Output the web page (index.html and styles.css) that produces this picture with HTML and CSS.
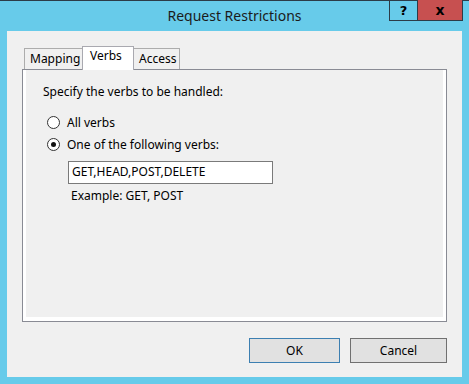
FILE: index.html
```html
<!DOCTYPE html>
<html>
<head>
<meta charset="utf-8">
<link rel="stylesheet" href="styles.css">
</head>
<body>
<div class="window">
  <div class="titlebar">
    <div class="spacer"></div>
    <div class="title">Request Restrictions</div>
    <div class="controls">
      <div class="ctl help">?</div>
      <div class="ctl close">x</div>
    </div>
  </div>
  <div class="client">
    <div class="tabs">
      <div class="tab">Mapping</div>
      <div class="tab active">Verbs</div>
      <div class="tab">Access</div>
    </div>
    <div class="panel">
      <div class="prompt">Specify the verbs to be handled:</div>
      <div class="radio-row first"><span class="radio"></span><span>All verbs</span></div>
      <div class="radio-row"><span class="radio checked"></span><span>One of the following verbs:</span></div>
      <div class="field">GET,HEAD,POST,DELETE</div>
      <div class="example">Example: GET, POST</div>
    </div>
    <div class="buttons">
      <div class="btn ok">OK</div>
      <div class="btn cancel">Cancel</div>
    </div>
  </div>
</div>
</body>
</html>
```
FILE: styles.css
```css
html, body {
  margin: 0;
  padding: 0;
}
body {
  background: #67cbea;
  font-family: "Noto Sans", "DejaVu Sans", sans-serif;
  font-size: 12px;
  color: #000;
}
.window {
  width: 469px;
  height: 384px;
  box-sizing: border-box;
  border-top: 1px solid #2c3c48;
  background: #67cbea;
}
.titlebar {
  height: 30px;
  display: grid;
  grid-template-columns: 1fr auto 1fr;
  align-items: start;
}
.title {
  font-size: 14px;
  color: #1b1b1b;
  line-height: 28px;
  padding-top: 1px;
}
.controls {
  justify-self: end;
  display: flex;
  margin-right: 6px;
  margin-top: -1px;
}
.ctl {
  height: 21px;
  box-sizing: border-box;
  border: 1px solid #2c3c48;
  border-top: none;
  display: flex;
  align-items: center;
  justify-content: center;
  font-weight: bold;
  font-size: 13px;
  font-family: "DejaVu Sans", sans-serif;
}
.help {
  width: 29px;
}
.close {
  width: 46px;
  margin-left: -1px;
  background: #c75050;
  font-size: 14px;
}
.client {
  margin: 0 7px;
  height: 346px;
  background: #f0f0f0;
  box-sizing: border-box;
  padding: 15px 15px 0 15px;
  display: flex;
  flex-direction: column;
}
.tabs {
  display: flex;
  align-items: flex-end;
  height: 23px;
  padding-left: 2px;
}
.tab {
  height: 21px;
  box-sizing: border-box;
  border: 1px solid #acacac;
  border-bottom: none;
  padding: 0 0 0 5px;
  line-height: 20px;
  background: #f0f0f0;
  margin-left: -1px;
}
.tab:first-child {
  margin-left: 0;
  width: 59px;
}
.tab.active {
  height: 24px;
  width: 52px;
  margin-bottom: -1px;
  background: #fff;
  position: relative;
  z-index: 1;
  padding-left: 7px;
  line-height: 18px;
  border-color: #a9a9b0;
}
.tab:last-child {
  width: 47px;
}
.panel {
  height: 253px;
  box-sizing: border-box;
  border: 1px solid #898b94;
  box-shadow: inset 3px 0 0 #fff, inset -3px 0 0 #fff, inset 0 -4px 0 #fff;
  background: #f0f0f0;
  padding: 14px 0 0 20px;
}
.prompt {
  line-height: 16px;
}
.radio-row {
  display: flex;
  align-items: center;
  gap: 7px;
  height: 16px;
  margin-top: 6px;
  padding-left: 4px;
}
.radio-row.first {
  margin-top: 14px;
}
.radio {
  width: 13px;
  height: 13px;
  box-sizing: border-box;
  border: 1px solid #333;
  border-radius: 50%;
  background: #fff;
  display: flex;
  align-items: center;
  justify-content: center;
}
.radio.checked::after {
  content: "";
  width: 5px;
  height: 5px;
  border-radius: 50%;
  background: #111;
}
.field {
  margin: 9px 0 0 25px;
  width: 205px;
  height: 23px;
  box-sizing: border-box;
  border: 1px solid #7a7a7a;
  background: #fff;
  padding-left: 3px;
  line-height: 20px;
}
.example {
  margin: 4px 0 0 28px;
  line-height: 16px;
}
.buttons {
  display: flex;
  justify-content: flex-end;
  gap: 10px;
  margin-top: 16px;
}
.btn {
  height: 25px;
  box-sizing: border-box;
  background: #e1e1e1;
  border: 1px solid #707070;
  display: flex;
  align-items: center;
  justify-content: center;
}
.ok {
  width: 91px;
  border-color: #3c7fb1;
}
.cancel {
  width: 97px;
}
```
